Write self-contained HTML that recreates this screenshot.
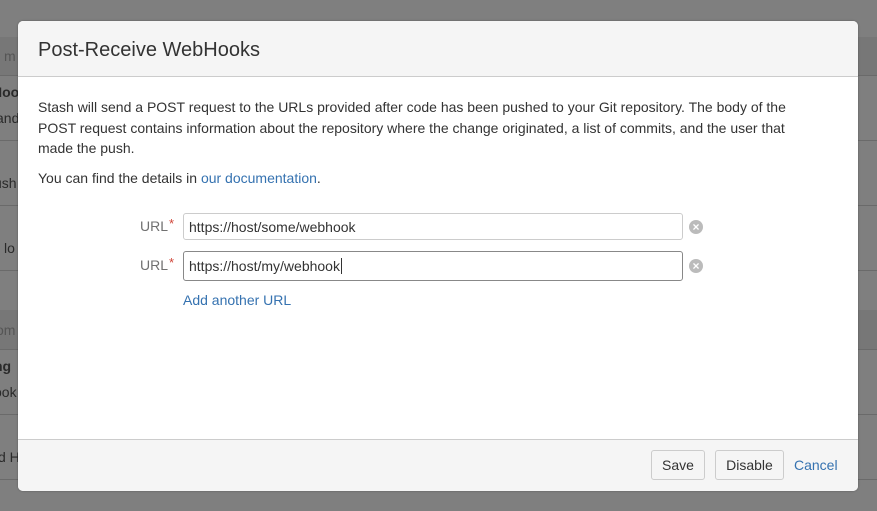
<!DOCTYPE html>
<html><head><style>
body{margin:0;width:877px;height:511px;overflow:hidden;background:#7f7f7f;font-family:"Liberation Sans",sans-serif;position:relative}
.band{position:absolute;left:0;right:0}
.ln{position:absolute;left:0;right:0;height:1px;background:#6a6a6a}
.bgt{position:absolute;font-size:14px;color:#2a2a2a}
.dlg{position:absolute;left:18px;top:21px;width:840px;height:470px;background:#fff;border-radius:5px;overflow:hidden;box-shadow:0 0 2px rgba(0,0,0,.3)}
.hd{height:55px;background:#f5f5f5;border-bottom:1px solid #ccc;position:relative}
.hd h2{margin:0;position:absolute;left:20px;top:18px;font-size:20px;font-weight:normal;color:#333}
.p{position:absolute;left:20px;font-size:14px;line-height:20.5px;color:#333;width:775px}
a{color:#3572b0;text-decoration:none}
.lab{position:absolute;font-size:14px;color:#707070}
.lab sup{color:#d04437;font-size:13px;position:relative;top:-2px;vertical-align:top;margin-left:1px}
.inp{position:absolute;left:165px;width:500px;height:27px;border:1px solid #ccc;border-radius:3px;box-sizing:border-box;font-size:14px;color:#333;padding:5px 5px;background:#fff}
.x{position:absolute;left:671px;width:14px;height:14px;border-radius:50%;background:#bbb;color:#fff;font-size:12px;line-height:14px;text-align:center;font-weight:bold}
.ft{position:absolute;left:0;right:0;bottom:0;height:51px;background:#f5f5f5;border-top:1px solid #ccc}
.btn{position:absolute;top:10px;height:30px;border:1px solid #ccc;border-radius:3px;background:#f5f5f5;box-sizing:border-box;font-size:14px;color:#333;text-align:center;line-height:28px}
</style></head><body>
<div class="band" style="top:37px;height:38px;background:#777"></div>
<div class="band" style="top:310px;height:39px;background:#777"></div>
<div class="ln" style="top:75px"></div><div class="ln" style="top:140px"></div><div class="ln" style="top:205px"></div><div class="ln" style="top:270px"></div>
<div class="ln" style="top:349px"></div><div class="ln" style="top:414px"></div><div class="ln" style="top:479px"></div>
<div class="bgt" style="left:4px;top:48px;color:#555">m</div>
<div class="bgt" style="left:-8px;top:84px;font-weight:bold">Hoo</div>
<div class="bgt" style="left:-4px;top:110px">and</div>
<div class="bgt" style="left:-6px;top:175px">ush</div>
<div class="bgt" style="left:4px;top:240px">lo</div>
<div class="bgt" style="left:-4px;top:322px;color:#555">om</div>
<div class="bgt" style="left:-6px;top:358px;font-weight:bold">ng</div>
<div class="bgt" style="left:-6px;top:384px">ook</div>
<div class="bgt" style="left:-2px;top:449px">d H</div>
<div class="dlg">
<div class="hd"><h2>Post-Receive WebHooks</h2></div>
<div class="p" style="top:76px">Stash will send a POST request to the URLs provided after code has been pushed to your Git repository. The body of the POST request contains information about the repository where the change originated, a list of commits, and the user that made the push.</div>
<div class="p" style="top:147px">You can find the details in <a>our documentation</a>.</div>
<div class="lab" style="left:122px;top:197px">URL<sup>*</sup></div>
<div class="inp" style="top:192px">https://host/some/webhook</div>
<div class="x" style="top:199px">×</div>
<div class="lab" style="left:122px;top:236px">URL<sup>*</sup></div>
<div class="inp" style="top:230px;border-color:#888;height:30px;padding-top:6px">https://host/my/webhook<span style="border-left:1px solid #333;margin-left:1px"></span></div>
<div class="x" style="top:238px">×</div>
<div class="p" style="top:269px;left:165px"><a>Add another URL</a></div>
<div class="ft">
<div class="btn" style="left:633px;width:54px">Save</div>
<div class="btn" style="left:697px;width:69px">Disable</div>
<a style="position:absolute;left:776px;top:17px;font-size:14px">Cancel</a>
</div>
</div>
</body></html>
